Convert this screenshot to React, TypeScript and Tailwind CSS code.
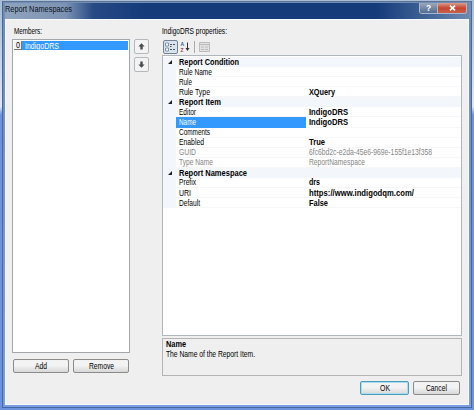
import { clsx } from "clsx";

type Row = {
  label: string;
  value?: string;
  header?: boolean;
  readOnly?: boolean;
  selected?: boolean;
  valueWidth?: number;
  width: number;
};

const rows: Row[] = [
  { label: "Report Condition", header: true, width: 60 },
  { label: "Rule Name", width: 33 },
  { label: "Rule", width: 13 },
  { label: "Rule Type", value: "XQuery", width: 31, valueWidth: 26 },
  { label: "Report Item", header: true, width: 42 },
  { label: "Editor", value: "IndigoDRS", width: 17, valueWidth: 39 },
  { label: "Name", value: "IndigoDRS", selected: true, width: 17, valueWidth: 39 },
  { label: "Comments", width: 31 },
  { label: "Enabled", value: "True", width: 25, valueWidth: 16 },
  { label: "GUID", value: "6fc6bd2c-e2da-45e6-969e-155f1e13f358", readOnly: true, width: 17, valueWidth: 123 },
  { label: "Type Name", value: "ReportNamespace", readOnly: true, width: 34, valueWidth: 56 },
  { label: "Report Namespace", header: true, width: 68 },
  { label: "Prefix", value: "drs", width: 17, valueWidth: 11 },
  { label: "URI", value: "https://www.indigodqm.com/", width: 12, valueWidth: 105 },
  { label: "Default", value: "False", width: 21, valueWidth: 19 },
];

function Label({ text, width, className }: { text: string; width: number; className?: string }) {
  return (
    <svg width={width} height="10" className={clsx("block shrink-0 overflow-visible fill-current", className)}>
      <text x="0" y="8" textLength={width} lengthAdjust="spacingAndGlyphs">
        {text}
      </text>
    </svg>
  );
}

function ArrowButton({ down }: { down?: boolean }) {
  return (
    <button className="flex h-[15px] w-[15px] items-center justify-center rounded-[2px] border border-[#b4b8bc] bg-[#f3f3f3]">
      <svg width="7" height="7" viewBox="0 0 7 7" className={clsx(down && "rotate-180")}>
        <path d="M3.5.2 6.6 3.6H4.7V6.5H2.3V3.6H.4Z" fill="#4a4a4a" />
      </svg>
    </button>
  );
}

function PushButton({ text, textWidth, className }: { text: string; textWidth: number; className: string }) {
  return (
    <button
      className={clsx(
        "flex h-[14px] items-center justify-center rounded-[2px] border bg-linear-to-b from-[#f3f3f3] from-45% to-[#d8d8d8]",
        className,
      )}
    >
      <Label text={text} width={textWidth} />
    </button>
  );
}

function TitleBar() {
  return (
    <div className="flex h-4 justify-between bg-[linear-gradient(to_right,#8fa3bd_0%,#7d93b3_13%,#274a85_19%,#153b7a_30%,#153b7a_80%,#46689a_92%,#6c88ae_100%)]">
      <div className="flex pt-px text-[8.5px] text-[#0c141c]">
        <Label text="Report Namespaces" width={67} />
      </div>
      <div className="mr-0.5 flex h-[11px] overflow-hidden rounded-b-[3px] border border-t-0 border-[#a9b7cb] text-white">
        <div className="flex w-[17px] items-center justify-center bg-linear-to-b from-[#9aa8bb] to-[#536c90] text-[8.5px] font-bold">?</div>
        <div className="flex w-[29px] items-center justify-center border-l border-[#b9b4bb] bg-linear-to-b from-[#dc9a8a] via-[#c4462f] via-50% to-[#cb604b]">
          <svg width="7" height="6" viewBox="0 0 7 6">
            <path d="m1 .7 5 4.6M6 .7 1 5.3" stroke="white" strokeWidth="1.7" />
          </svg>
        </div>
      </div>
    </div>
  );
}

function Toolbar() {
  return (
    <div className="flex h-[14px] items-center">
      <div className="flex h-[14px] w-[15px] items-center justify-center rounded-[2px] border border-[#708294] bg-[#dbe3ea]">
        <svg width="11" height="10" viewBox="0 0 11 10">
          <path d="M.5 1h3v3h-3zM.5 6h3v3h-3z" fill="#fff" stroke="#657f9c" strokeWidth=".8" />
          <path d="M5 2.5h2M8 2.5h2M5 4.5h1.5M5 7.5h2M8 7.5h2" stroke="#4a5866" />
        </svg>
      </div>
      <svg width="11" height="12" viewBox="0 0 11 12" className="ml-0.5">
        <text x="0.5" y="4.8" fontSize="5" fontWeight="bold" fill="#405ca2">A</text>
        <text x="0.5" y="10.9" fontSize="5" fontWeight="bold" fill="#a33c4d">Z</text>
        <path d="M7.5 1.5v7" stroke="#343434" />
        <path d="M5.5 7h4l-2 3z" fill="#343434" />
      </svg>
      <div className="ml-[3px] h-3 w-px bg-[#aaa]" />
      <svg width="11" height="10" viewBox="0 0 11 10" className="ml-1">
        <path d="M.5.5h10v9H.5z" fill="#e2e2e2" stroke="#bcbcbc" />
        <path d="M1 2.5h9M2 5h3M6 5h3M2 7.5h3M6 7.5h3" stroke="#bbb" />
      </svg>
    </div>
  );
}

function PropertyRow({ row }: { row: Row }) {
  return (
    <div className={clsx("flex h-[10.08px] items-center", row.readOnly ? "text-[#858585]" : "text-black")}>
      <div className="flex h-full w-[13px] shrink-0 items-center justify-center bg-[#f3f6fb]">
        {row.header && (
          <svg width="4" height="4" viewBox="0 0 4 4">
            <path d="M4 0v4H0z" fill="#222" />
          </svg>
        )}
      </div>
      {row.header ? (
        <div className="flex h-full flex-1 items-center bg-[#f3f6fb] pl-[3px]">
          <Label text={row.label} width={row.width} className="font-bold" />
        </div>
      ) : (
        <>
          <div
            className={clsx(
              "flex h-full w-[130px] shrink-0 items-center border-b pl-[3px]",
              row.selected ? "border-[#3399ff] bg-[#3399ff] text-white" : "border-[#f7f7f9]",
            )}
          >
            <Label text={row.label} width={row.width} />
          </div>
          <div className="flex h-full flex-1 items-center border-b border-[#f7f7f9] pl-[3px]">
            {row.value && (
              <Label text={row.value} width={row.valueWidth ?? 0} className={clsx(!row.readOnly && "font-bold")} />
            )}
          </div>
        </>
      )}
    </div>
  );
}

export default function App() {
  return (
    <div className="flex h-[410px] w-[474px] flex-col overflow-hidden bg-linear-to-b from-[#a9bdd6] via-[#dbe8f7] via-26% to-[#6f92dc] to-28% pt-px font-['Liberation_Sans',sans-serif] text-[8.7px] leading-none">
      <div className="mr-0.5 ml-0.5 flex h-[407px] flex-col border border-[#4668a0] border-t-[#5f7394] bg-linear-to-b from-[#6f8db5] to-[#7b9ce0] px-[2px] pt-px">
        <TitleBar />
        <main className="flex h-[386px] border border-[#f6f8fa] bg-[#efefef] pl-1.5">
          <section className="w-[118px] pt-[6px]">
            <Label text="Members:" width={28} className="ml-[2px]" />
            <div className="mt-[3px] h-[314px] border border-[#a3a7aa] bg-white p-px">
              <div className="flex h-[9px] items-center bg-[#3399ff] text-white">
                <div className="flex h-[9px] w-2 items-center justify-center border-r border-b border-[#777] bg-[#f4f4f4] text-black">
                  <Label text="0" width={4} />
                </div>
                <Label text="IndigoDRS" width={34} className="ml-[3px]" />
              </div>
            </div>
            <div className="mt-1.5 flex justify-between px-px">
              <PushButton text="Add" textWidth={12} className="w-14 border-[#8b8b8b]" />
              <PushButton text="Remove" textWidth={25} className="w-14 border-[#8b8b8b]" />
            </div>
          </section>
          <div className="ml-1 flex w-[15px] flex-col gap-[3px] pt-[19px]">
            <ArrowButton />
            <ArrowButton down />
          </div>
          <section className="ml-[13px] w-[300px] pt-[6px]">
            <Label text="IndigoDRS properties:" width={65} />
            <div className="mt-1 ml-px">
              <Toolbar />
            </div>
            <div className="mt-px h-[281px] border border-[#b0b6bd] bg-white pt-px">
              {rows.map((row) => (
                <PropertyRow key={row.label} row={row} />
              ))}
            </div>
            <div className="mt-0.5 h-[38px] border border-[#b4b4b4] px-[3px]">
              <Label text="Name" width={20} className="font-bold" />
              <Label text="The Name of the Report Item." width={89} />
            </div>
            <div className="mt-[5px] mr-0.5 flex justify-end gap-1">
              <PushButton text="OK" textWidth={10} className="w-[49px] border-[#4c9dba] ring-1 ring-[#a9dced] ring-inset" />
              <PushButton text="Cancel" textWidth={21} className="w-[47px] border-[#8b8b8b]" />
            </div>
          </section>
        </main>
      </div>
    </div>
  );
}
